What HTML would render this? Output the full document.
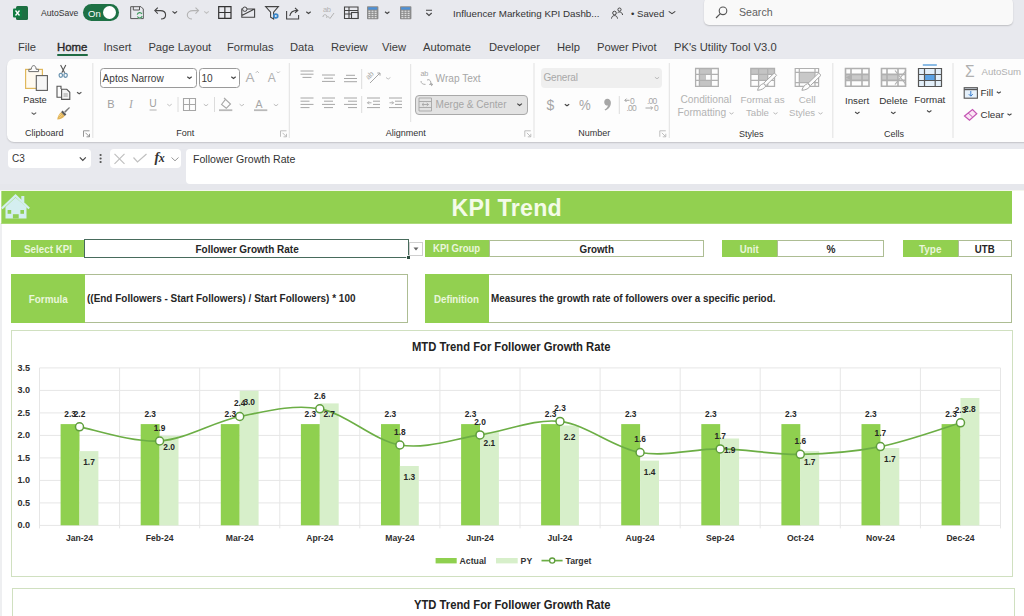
<!DOCTYPE html>
<html><head><meta charset="utf-8">
<style>
*{margin:0;padding:0;box-sizing:border-box}
html,body{width:1024px;height:616px;overflow:hidden;background:#e8e9ee;font-family:"Liberation Sans",sans-serif;color:#262626}
.a{position:absolute;white-space:nowrap}
.t{position:absolute;white-space:nowrap;line-height:1}
svg{position:absolute;overflow:visible}
.tab{font-size:11.2px;color:#3b3b3b;top:41.8px}
.gl{font-size:8.8px;color:#3a3a3a;top:129px}
.dis{color:#a8a8a8}
.lbl{background:#92d050;color:#eaf6dc;font-weight:bold;display:flex;align-items:center;justify-content:center;padding-top:1px}
.box{background:#fff;border:1.3px solid #adbd93}
</style></head><body>

<!-- ===== TITLE BAR ===== -->
<div id="titlebar">
  <!-- excel logo -->
  <svg style="left:13px;top:6px" width="15" height="14" viewBox="0 0 15 14">
    <rect x="3" y="0" width="12" height="14" rx="1.5" fill="#1d6f42"/>
    <rect x="0" y="2.5" width="9" height="9" rx="1" fill="#107c41"/>
    <path d="M2.5 4.5 L6.5 9.5 M6.5 4.5 L2.5 9.5" stroke="#fff" stroke-width="1.3"/>
  </svg>
  <div class="t" style="left:41px;top:9px;font-size:8.6px;color:#333">AutoSave</div>
  <div class="a" style="left:83px;top:4px;width:36px;height:17px;border-radius:9px;background:#1e7145"></div>
  <div class="t" style="left:88px;top:8.5px;font-size:9.5px;color:#fff">On</div>
  <div class="a" style="left:103px;top:6px;width:13px;height:13px;border-radius:50%;background:#fff"></div>
  <div class="t" style="left:453px;top:8.5px;font-size:9.8px;color:#333">Influencer Marketing KPI Dashb...</div>
  <div class="t" style="left:631px;top:8.5px;font-size:9.6px;color:#333">• Saved</div>
  <!-- search -->
  <div class="a" style="left:704px;top:-2px;width:309px;height:27px;border-radius:5px;background:#f9f9f9;box-shadow:0 1px 1.5px rgba(0,0,0,.18)"></div>
  <div class="t" style="left:739px;top:6.5px;font-size:10.6px;color:#5f5f5f">Search</div>
</div>

<!-- ===== TABS ===== -->
<div class="t tab" style="left:18px">File</div>
<div class="t tab" style="left:57px;font-size:11.4px;color:#2a2a2a;-webkit-text-stroke:0.4px #2a2a2a">Home</div>
<div class="a" style="left:57px;top:54.2px;width:31px;height:2.2px;border-radius:1.5px;background:#1f6b44"></div>
<div class="t tab" style="left:103.5px">Insert</div>
<div class="t tab" style="left:148.4px">Page Layout</div>
<div class="t tab" style="left:227px">Formulas</div>
<div class="t tab" style="left:290px">Data</div>
<div class="t tab" style="left:331px">Review</div>
<div class="t tab" style="left:382px">View</div>
<div class="t tab" style="left:423px">Automate</div>
<div class="t tab" style="left:489px">Developer</div>
<div class="t tab" style="left:557px">Help</div>
<div class="t tab" style="left:597px">Power Pivot</div>
<div class="t tab" style="left:674px">PK's Utility Tool V3.0</div>

<!-- ===== RIBBON ===== -->
<div class="a" style="left:7px;top:58.5px;width:1030px;height:83px;border-radius:7px;background:#fdfdfd;box-shadow:0 1px 1.5px rgba(0,0,0,.16)"></div>
<div id="ribbon"><div class="t" style="left:323px;top:5.5px;font-size:7.5px;color:#b3b3b3;letter-spacing:-0.3px">ab</div><div class="t" style="left:23.3px;top:96.3px;font-size:9.3px;color:#333;letter-spacing:-0.1px;">Paste</div><div class="t" style="left:25px;top:129.2px;font-size:9.0px;color:#333;">Clipboard</div><div class="a" style="left:100.4px;top:68px;width:96.3px;height:19.6px;border:1px solid #9a9a9a;border-radius:3.5px;background:#fff"></div><div class="t" style="left:102.6px;top:73.9px;font-size:10.1px;color:#3a3a3a;">Aptos Narrow</div><div class="a" style="left:199.3px;top:68px;width:41px;height:19.6px;border:1px solid #9a9a9a;border-radius:3.5px;background:#fff"></div><div class="t" style="left:201.5px;top:73.9px;font-size:10.1px;color:#3a3a3a;">10</div><div class="t" style="left:245.5px;top:71.1px;font-size:13.5px;color:#b0b0b0;">A</div><div class="t" style="left:267.8px;top:72.1px;font-size:12px;color:#b0b0b0;">A</div><div class="t" style="left:107.3px;top:98.9px;font-size:11px;color:#a0a0a0;">B</div><div class="t" style="left:129px;top:98.5px;font-size:11.5px;color:#a8a8a8;font-family:'Liberation Serif',serif;font-style:italic">I</div><div class="t" style="left:149.3px;top:98.8px;font-size:10.3px;color:#a0a0a0;">U</div><div class="t" style="left:255.5px;top:98.6px;font-size:10.5px;color:#a6a6a6;">A</div><div class="t" style="left:176.3px;top:129.2px;font-size:9.0px;color:#333;">Font</div><div class="t" style="left:366px;top:70px;font-size:7.5px;color:#a6a6a6;transform:rotate(-45deg);transform-origin:6px 5px;letter-spacing:-0.4px">ab</div><div class="t" style="left:420.5px;top:69.5px;font-size:7.3px;color:#a6a6a6;letter-spacing:-0.3px">ab</div><div class="t" style="left:435.6px;top:73.7px;font-size:10.1px;color:#a6a6a6;">Wrap Text</div><div class="a" style="left:415px;top:94.8px;width:112.8px;height:20px;border:1px solid #a9a9a9;border-radius:4px;background:#e3e3e3"></div><div class="t" style="left:435.6px;top:100.0px;font-size:10.06px;color:#a6a6a6;">Merge &amp; Center</div><div class="t" style="left:385.8px;top:129.2px;font-size:9.0px;color:#333;">Alignment</div><div class="a" style="left:541.2px;top:68px;width:121.3px;height:19.6px;border-radius:4px;background:#efefef"></div><div class="t" style="left:543.5px;top:73.4px;font-size:10px;color:#a8a8a8;letter-spacing:-0.2px;">General</div><div class="t" style="left:546.5px;top:97.9px;font-size:14px;color:#a6a6a6;">$</div><div class="t" style="left:578.6px;top:97.1px;font-size:15.5px;color:#a6a6a6;transform:scaleX(0.85);transform-origin:0 0;">%</div><div class="t" style="left:630px;top:96.5px;font-size:8.5px;color:#a6a6a6">0</div><div class="t" style="left:626.5px;top:104px;font-size:8.5px;color:#a6a6a6;letter-spacing:-0.8px">.00</div><div class="t" style="left:647px;top:96.5px;font-size:8.5px;color:#a6a6a6;letter-spacing:-0.8px">.00</div><div class="t" style="left:654px;top:104px;font-size:8.5px;color:#a6a6a6">0</div><div class="t" style="left:578.3px;top:129.2px;font-size:9.0px;color:#333;">Number</div><div class="t" style="left:680.5px;top:94.6px;font-size:10.2px;color:#b3b3b3;">Conditional</div><div class="t" style="left:677.5px;top:108.1px;font-size:10.2px;color:#b3b3b3;">Formatting</div><div class="t" style="left:740.5px;top:94.8px;font-size:9.8px;color:#b3b3b3;">Format as</div><div class="t" style="left:746px;top:108.4px;font-size:9.6px;color:#b3b3b3;">Table</div><div class="t" style="left:798.7px;top:94.8px;font-size:9.8px;color:#b3b3b3;">Cell</div><div class="t" style="left:789px;top:108.4px;font-size:9.6px;color:#b3b3b3;">Styles</div><div class="t" style="left:739px;top:129.7px;font-size:9.0px;color:#333;">Styles</div><div class="t" style="left:845px;top:95.8px;font-size:9.7px;color:#333;">Insert</div><div class="t" style="left:879.2px;top:95.7px;font-size:9.9px;color:#333;">Delete</div><div class="t" style="left:914.3px;top:94.8px;font-size:9.8px;color:#333;">Format</div><div class="t" style="left:884px;top:129.7px;font-size:9.0px;color:#333;">Cells</div><div class="t" style="left:964.8px;top:63.6px;font-size:16px;color:#b0b0b0;transform:scaleX(0.97);transform-origin:0 0;">&#931;</div><div class="t" style="left:981.6px;top:66.6px;font-size:9.6px;color:#b0b0b0;">AutoSum</div><div class="t" style="left:980.6px;top:88.1px;font-size:9.8px;color:#333;">Fill</div><div class="t" style="left:980.6px;top:110.1px;font-size:9.8px;color:#333;">Clear</div><svg style="left:0;top:0" width="1024" height="616"><path d="M130.7 6.7 H141 L143.3 9 V18.6 H130.7 Z" fill="none" stroke="#555" stroke-width="1"/><path d="M133.3 6.7 V10 H139.5 V6.7" fill="none" stroke="#555" stroke-width="1"/><circle cx="139.7" cy="15.3" r="3.3" fill="#e8e9ee"/><path d="M137.2 14.6 A2.6 2.6 0 0 1 142 14 M142.2 16 A2.6 2.6 0 0 1 137.4 16.6" fill="none" stroke="#3c9a5c" stroke-width="1.1"/><path d="M155.3 10.6 H160.3 C163.6 10.6 165.6 12.6 165.6 15 C165.6 17.4 163.6 19 161 19" fill="none" stroke="#444" stroke-width="1.1"/><path d="M157.8 7.6 L154.8 10.6 L157.8 13.6" fill="none" stroke="#444" stroke-width="1.1"/><path d="M172.5 11.4 L174.8 13.2 L177.1 11.4" fill="none" stroke="#444" stroke-width="1.1"/><path d="M198.2 10.6 H193 C189.7 10.6 187.3 12.6 187.3 15 C187.3 17.4 189.5 19 192 19" fill="none" stroke="#b3b3b3" stroke-width="1.1"/><path d="M195.5 7.6 L198.5 10.6 L195.5 13.6" fill="none" stroke="#b3b3b3" stroke-width="1.1"/><path d="M204.2 11.4 L206.5 13.2 L208.8 11.4" fill="none" stroke="#c0c0c0" stroke-width="1.1"/><path d="M218.7 6.6 H231 V18.4 H218.7 Z M224.85 6.6 V18.4 M218.7 12.5 H231" fill="none" stroke="#333" stroke-width="1.2"/><path d="M241.8 9 H254.6 V17.2 H241.8 Z M241.8 15.5 L254.6 9" fill="none" stroke="#444" stroke-width="1.1"/><circle cx="244.8" cy="9.2" r="2.2" fill="#e8e9ee" stroke="#444" stroke-width="1"/><path d="M265.6 6.6 H278.4 L273.6 12.2 V19 L270.6 17.2 V12.2 Z" fill="none" stroke="#444" stroke-width="1.1"/><circle cx="275.8" cy="16" r="2.8" fill="#3a86c8"/><circle cx="275.8" cy="16" r="1" fill="#e8e9ee"/><path d="M286.6 11 V19 H298.6 V15" fill="none" stroke="#444" stroke-width="1.1"/><path d="M289.8 16 C290.3 12.3 293 10.4 297.5 10.4 M295 8 L297.8 10.4 L295 12.8" fill="none" stroke="#444" stroke-width="1.1"/><path d="M306.3 11.8 L308.5 13.5 L310.7 11.8" fill="none" stroke="#444" stroke-width="1.1"/><path d="M323 17 A2 2 0 1 1 326.5 18 M327.5 16 L330 18.5 L334 13" fill="none" stroke="#b3b3b3" stroke-width="1"/><path d="M344.5 7 H358 V18.5 H344.5 Z M344.5 10.5 H358 M349 7 V18.5 M344.5 14 H352" fill="none" stroke="#444" stroke-width="1.1"/><rect x="351.5" y="12.5" width="6.5" height="6" fill="#e8e9ee" stroke="#444" stroke-width="1.1"/><rect x="367" y="6.3" width="11.4" height="13" rx="0.8" fill="#8a8a8a"/><rect x="368.2" y="7.3" width="9" height="2.3" fill="#4a90d9"/><rect x="368.4" y="10.6" width="2" height="1.3" fill="#dcdcdc"/><rect x="371.5" y="10.6" width="2" height="1.3" fill="#dcdcdc"/><rect x="374.6" y="10.6" width="2" height="1.3" fill="#dcdcdc"/><rect x="368.4" y="12.7" width="2" height="1.3" fill="#dcdcdc"/><rect x="371.5" y="12.7" width="2" height="1.3" fill="#dcdcdc"/><rect x="374.6" y="12.7" width="2" height="1.3" fill="#dcdcdc"/><rect x="368.4" y="14.8" width="2" height="1.3" fill="#dcdcdc"/><rect x="371.5" y="14.8" width="2" height="1.3" fill="#dcdcdc"/><rect x="374.6" y="14.8" width="2" height="1.3" fill="#dcdcdc"/><rect x="368.4" y="16.9" width="2" height="1.3" fill="#dcdcdc"/><rect x="371.5" y="16.9" width="2" height="1.3" fill="#dcdcdc"/><rect x="374.6" y="16.9" width="2" height="1.3" fill="#dcdcdc"/><rect x="400" y="6.3" width="11.4" height="13" rx="0.8" fill="#8a8a8a"/><rect x="401.2" y="7.3" width="9" height="2.3" fill="#4a90d9"/><rect x="401.4" y="10.6" width="2" height="1.3" fill="#dcdcdc"/><rect x="404.5" y="10.6" width="2" height="1.3" fill="#dcdcdc"/><rect x="407.6" y="10.6" width="2" height="1.3" fill="#dcdcdc"/><rect x="401.4" y="12.7" width="2" height="1.3" fill="#dcdcdc"/><rect x="404.5" y="12.7" width="2" height="1.3" fill="#dcdcdc"/><rect x="407.6" y="12.7" width="2" height="1.3" fill="#dcdcdc"/><rect x="401.4" y="14.8" width="2" height="1.3" fill="#dcdcdc"/><rect x="404.5" y="14.8" width="2" height="1.3" fill="#dcdcdc"/><rect x="407.6" y="14.8" width="2" height="1.3" fill="#dcdcdc"/><rect x="401.4" y="16.9" width="2" height="1.3" fill="#dcdcdc"/><rect x="404.5" y="16.9" width="2" height="1.3" fill="#dcdcdc"/><rect x="407.6" y="16.9" width="2" height="1.3" fill="#dcdcdc"/><path d="M385.0 11.8 L387.2 13.5 L389.4 11.8" fill="none" stroke="#444" stroke-width="1.1"/><path d="M426 10.3 H432 M426.3 13 L429 15.5 L431.7 13" fill="none" stroke="#444" stroke-width="1.1"/><circle cx="614.5" cy="13" r="1.8" fill="none" stroke="#444" stroke-width="1"/><path d="M611.5 18.6 C611.7 16.6 612.8 15.6 614.5 15.6 C616.2 15.6 617.3 16.6 617.5 18.6" fill="none" stroke="#444" stroke-width="1"/><circle cx="619.5" cy="9.6" r="1.6" fill="none" stroke="#444" stroke-width="1"/><path d="M617.6 12.8 C618.2 12.2 618.8 12 619.5 12 C621.2 12 622.3 13 622.6 15" fill="none" stroke="#444" stroke-width="1"/><path d="M668.7 11.4 L672.0 13.6 L675.3 11.4" fill="none" stroke="#444" stroke-width="1.1"/><circle cx="723" cy="10.8" r="3.8" fill="none" stroke="#555" stroke-width="1.1"/><path d="M720.3 13.6 L716 18" stroke="#555" stroke-width="1.2"/><rect x="25.6" y="69.4" width="16.8" height="19" fill="#fffaf0" stroke="#e0b85c" stroke-width="1.2"/><path d="M28.8 71.6 V69.3 H31.2 C31.5 66.6 32.5 65.6 33.7 65.6 C34.9 65.6 35.9 66.6 36.2 69.3 H38.6 V71.6 Z" fill="#fdfdfd" stroke="#6f6f6f" stroke-width="1"/><rect x="36.3" y="75.6" width="11.1" height="14.8" fill="#f6f6f6" stroke="#5e5e5e" stroke-width="1.1"/><path d="M31.6 112.6 L33.9 114.4 L36.2 112.6" fill="none" stroke="#555" stroke-width="1.1"/><path d="M60.6 65 L64.6 72.8 M65.8 65 L61.8 72.8" fill="none" stroke="#555" stroke-width="1.1"/><ellipse cx="60.8" cy="75.3" rx="1.7" ry="2" fill="none" stroke="#6a93b0" stroke-width="1.2"/><ellipse cx="65.6" cy="75.3" rx="1.7" ry="2" fill="none" stroke="#6a93b0" stroke-width="1.2"/><path d="M61 89 V86.2 H57 V97.2 H61" fill="none" stroke="#555" stroke-width="1.1"/><path d="M61.6 89.3 H66.8 L69.8 92.3 V99.4 H61.6 Z" fill="#f4f4f4" stroke="#555" stroke-width="1.1"/><path d="M63.5 94 H67.8 M63.5 96 H67.8" stroke="#777" stroke-width="0.7"/><path d="M77.0 92.2 L79.2 93.8 L81.4 92.2" fill="none" stroke="#555" stroke-width="1.1"/><path d="M64.2 111.6 L68.6 107.4 C69.3 106.8 70.2 107.6 69.6 108.3 L65.4 112.8 Z" fill="#7a7a7a"/><path d="M62.6 110.6 L66.4 114.4 L64.6 116 L61 112.2 Z" fill="#5a5a5a"/><path d="M61 112.2 L64.6 116 C63 118 60.5 119.5 57.2 119.6 C57.5 116.8 59 114 61 112.2 Z" fill="#e2b356"/><path d="M59.5 117.8 L62.2 115 M58.6 116.2 L61.2 113.8" stroke="#f6dfa8" stroke-width="0.7"/><path d="M83.5 136.8 V130.8 H89.5" fill="none" stroke="#8a8a8a" stroke-width="0.9"/><path d="M85.5 132.8 L89.5 136.8 M86.5 136.8 H89.5 V133.8" fill="none" stroke="#8a8a8a" stroke-width="0.9"/><path d="M92.8 63V138" stroke="#e1e1e1" stroke-width="1"/><path d="M187.3 76.8 L189.5 78.4 L191.7 76.8" fill="none" stroke="#444" stroke-width="1.2"/><path d="M231.3 76.8 L233.5 78.4 L235.7 76.8" fill="none" stroke="#444" stroke-width="1.2"/><path d="M255.8 72.8 L257.3 71.3 L258.8 72.8" fill="none" stroke="#b0b0b0" stroke-width="0.9"/><path d="M276.8 71.5 L278.3 73 L279.8 71.5" fill="none" stroke="#b0b0b0" stroke-width="0.9"/><path d="M149.6 110 H156.6" stroke="#a8a8a8" stroke-width="0.9"/><path d="M167.3 104.2 L169.5 105.8 L171.7 104.2" fill="none" stroke="#c0c0c0" stroke-width="1"/><path d="M178 97V112" stroke="#dcdcdc" stroke-width="1"/><path d="M183.5 98.5 H195.5 V110.5 H183.5 Z M189.5 98.5 V110.5 M183.5 104.5 H195.5" fill="none" stroke="#a6a6a6" stroke-width="1.1"/><path d="M203.8 104.2 L206.0 105.8 L208.2 104.2" fill="none" stroke="#c0c0c0" stroke-width="1"/><path d="M214.5 97V112" stroke="#dcdcdc" stroke-width="1"/><path d="M221.5 104.5 L225.5 99.3 L230.5 104 L226.3 108.3 Z" fill="none" stroke="#a6a6a6" stroke-width="1.1"/><path d="M225.5 99.3 L224 97.8" stroke="#a6a6a6" stroke-width="1.1"/><rect x="219" y="109.3" width="13.3" height="1.8" fill="#b9b9b9"/><path d="M239.6 104.2 L241.8 105.8 L244.0 104.2" fill="none" stroke="#c0c0c0" stroke-width="1"/><rect x="254" y="109.3" width="13.3" height="1.8" fill="#b9b9b9"/><path d="M273.8 104.2 L276.0 105.8 L278.2 104.2" fill="none" stroke="#c0c0c0" stroke-width="1"/><path d="M280.5 136.8 V130.8 H286.5" fill="none" stroke="#b8b8b8" stroke-width="0.9"/><path d="M282.5 132.8 L286.5 136.8 M283.5 136.8 H286.5 V133.8" fill="none" stroke="#b8b8b8" stroke-width="0.9"/><path d="M289.3 63V138" stroke="#e1e1e1" stroke-width="1"/><path d="M300.5 71.0H313.5M300.5 74.2H313.5" stroke="#a6a6a6" stroke-width="1"/><path d="M302.5 77.4H311.5" stroke="#a6a6a6" stroke-width="1"/><path d="M322.0 75.0H335.0M324.0 78.2H333.0M322.0 81.4H335.0" stroke="#a6a6a6" stroke-width="1"/><path d="M344.0 78.5H357.0M344.0 81.7H357.0" stroke="#a6a6a6" stroke-width="1"/><path d="M346.0 75.3H355.0" stroke="#a6a6a6" stroke-width="1"/><path d="M361.7 69V89" stroke="#dcdcdc" stroke-width="1"/><path d="M370 83 L380 73 M377.3 73 H380 V75.7" fill="none" stroke="#a6a6a6" stroke-width="1"/><path d="M386.0 77.5 L388.2 79.1 L390.4 77.5" fill="none" stroke="#c0c0c0" stroke-width="1"/><path d="M300.5 98.0H313.5M300.5 101.2H309.5M300.5 104.4H313.5M300.5 107.6H309.5" stroke="#a6a6a6" stroke-width="1"/><path d="M322.0 98.0H335.0M324.0 101.2H333.0M322.0 104.4H335.0M324.0 107.6H333.0" stroke="#a6a6a6" stroke-width="1"/><path d="M344.0 98.0H357.0M348.0 101.2H357.0M344.0 104.4H357.0M348.0 107.6H357.0" stroke="#a6a6a6" stroke-width="1"/><path d="M361.7 96V113" stroke="#dcdcdc" stroke-width="1"/><path d="M367.0 98.0H380.0M373.0 101.2H380.0M373.0 104.4H380.0M367.0 107.6H380.0" stroke="#a6a6a6" stroke-width="1"/><path d="M371.5 102.8 H367.5 M369 101.3 L367.5 102.8 L369 104.3" fill="none" stroke="#a6a6a6" stroke-width="0.9"/><path d="M389.0 98.0H402.0M395.0 101.2H402.0M395.0 104.4H402.0M389.0 107.6H402.0" stroke="#a6a6a6" stroke-width="1"/><path d="M389.5 102.8 H393.5 M392 101.3 L393.5 102.8 L392 104.3" fill="none" stroke="#a6a6a6" stroke-width="0.9"/><path d="M410.7 64V122" stroke="#e1e1e1" stroke-width="1"/><path d="M421 81 C421 83.6 423 84.4 425.5 84.4 M427 80 A2 2 0 1 1 429.5 84.5 L432.5 84.5 M431 83 L432.8 84.5 L431 86" fill="none" stroke="#a6a6a6" stroke-width="0.9"/><path d="M419 98 H431.5 V111 H419 Z M419 101.5 H431.5 M419 107.5 H431.5 M422 104.5 H428.5 M423.8 103 L422 104.5 L423.8 106 M426.7 103 L428.5 104.5 L426.7 106" fill="none" stroke="#a6a6a6" stroke-width="0.9"/><path d="M517.3 103.6 L519.6 105.4 L521.9 103.6" fill="none" stroke="#444" stroke-width="1.2"/><path d="M524.8 136.8 V130.8 H530.8" fill="none" stroke="#b8b8b8" stroke-width="0.9"/><path d="M526.8 132.8 L530.8 136.8 M527.8 136.8 H530.8 V133.8" fill="none" stroke="#b8b8b8" stroke-width="0.9"/><path d="M534 63V138" stroke="#e1e1e1" stroke-width="1"/><path d="M654.9 77.2 L657.0 78.8 L659.1 77.2" fill="none" stroke="#bbb" stroke-width="1"/><path d="M564.8 104.2 L567.0 105.8 L569.2 104.2" fill="none" stroke="#444" stroke-width="1.1"/><path d="M607.2 98.8 C609.6 98.8 610.9 100.6 610.9 102.8 C610.9 106.3 608.6 109.2 605.2 110.6 L604.6 109.6 C606.4 108.5 607.6 107.2 607.9 105.6 C605.6 105.6 604.2 104.2 604.2 102.2 C604.2 100.2 605.5 98.8 607.2 98.8 Z" fill="#a6a6a6"/><path d="M619.3 96V114" stroke="#dcdcdc" stroke-width="1"/><path d="M629.5 100.3 H624.8 M626.5 98.6 L624.8 100.3 L626.5 102" fill="none" stroke="#a6a6a6" stroke-width="1"/><path d="M645.5 108 H652.5 M650.8 106.3 L652.5 108 L650.8 109.7" fill="none" stroke="#a6a6a6" stroke-width="1"/><path d="M659.8 136.8 V130.8 H665.8" fill="none" stroke="#b8b8b8" stroke-width="0.9"/><path d="M661.8 132.8 L665.8 136.8 M662.8 136.8 H665.8 V133.8" fill="none" stroke="#b8b8b8" stroke-width="0.9"/><path d="M669.3 63V138" stroke="#e1e1e1" stroke-width="1"/><rect x="699.5" y="68.5" width="11.5" height="5.6" fill="#c4c4c4"/><rect x="699.5" y="74.4" width="6.5" height="5.8" fill="#c4c4c4"/><rect x="699.5" y="80.4" width="11.5" height="5.8" fill="#c4c4c4"/><path d="M695.6 68.5H718.3V86.3H695.6Z M699.4 68.5V86.3 M711.2 68.5V86.3 M695.6 74.4H718.3 M695.6 80.4H718.3" fill="none" stroke="#b0b0b0" stroke-width="1.3"/><rect x="750.8" y="68.5" width="23.7" height="5.9" fill="#c4c4c4"/><rect x="758.6" y="74.4" width="9.1" height="6" fill="#c4c4c4"/><path d="M750.8 68.5H774.5V86.3H750.8Z M758.6 68.5V86.3 M767.7 68.5V86.3 M750.8 74.4H774.5 M750.8 80.4H774.5" fill="none" stroke="#b0b0b0" stroke-width="1.3"/><path d="M776.6 75.3 L766 85.6 L763.6 83.3 L774.3 73 Z" fill="#fdfdfd" stroke="#a8a8a8" stroke-width="1"/><path d="M763.3 83.6 L765.8 86 C764.5 88.5 761.5 90 757.5 90.3 C758.3 87 760.5 84.5 763.3 83.6 Z" fill="#fdfdfd" stroke="#a8a8a8" stroke-width="1"/><rect x="799.5" y="72.5" width="15.5" height="10" fill="#c8c8c8"/><path d="M795.2 68.5H818.6V86.3H795.2Z M799.3 68.5V86.3 M795.2 72.4H818.6 M815 68.5V86.3 M795.2 82.6H818.6" fill="none" stroke="#b0b0b0" stroke-width="1.2"/><path d="M821 75.3 L810.4 85.6 L808 83.3 L818.7 73 Z" fill="#fdfdfd" stroke="#a8a8a8" stroke-width="1"/><path d="M807.7 83.6 L810.2 86 C808.9 88.5 805.9 90 801.9 90.3 C802.7 87 804.9 84.5 807.7 83.6 Z" fill="#fdfdfd" stroke="#a8a8a8" stroke-width="1"/><path d="M729.5 112.6 L731.5 114.0 L733.5 112.6" fill="none" stroke="#b8b8b8" stroke-width="1"/><path d="M773.5 112.6 L775.5 114.0 L777.5 112.6" fill="none" stroke="#b8b8b8" stroke-width="1"/><path d="M818.5 112.6 L820.5 114.0 L822.5 112.6" fill="none" stroke="#b8b8b8" stroke-width="1"/><path d="M832.8 63V138" stroke="#e1e1e1" stroke-width="1"/><rect x="845.5" y="74.4" width="23.5" height="6.0" fill="#c9c9c9"/><path d="M845.5 68.5H869V86.3H845.5Z M851 68.5V86.3 M862 68.5V86.3 M845.5 74.4H869 M845.5 80.4H869" fill="none" stroke="#b0b0b0" stroke-width="1.6"/><path d="M852 74 L845.5 77.4 L852 80.8 Z" fill="#b0b0b0"/><rect x="881.5" y="74.4" width="16.5" height="6.0" fill="#c9c9c9"/><path d="M881.5 68.5H905.5V86.3H881.5Z M887 68.5V86.3 M898 68.5V86.3 M881.5 74.4H905.5 M881.5 80.4H905.5" fill="none" stroke="#b0b0b0" stroke-width="1.6"/><path d="M895 70.5 L906 84.5 M906 70.5 L895 84.5" stroke="#b0b0b0" stroke-width="1.2"/><path d="M922.8 65 H936.8" stroke="#3f8fd6" stroke-width="1.2"/><rect x="918.5" y="68.5" width="23.0" height="18.0" fill="#e3f0fb"/><rect x="924.5" y="74.5" width="10.700000000000045" height="6.0" fill="#5ba3e6"/><path d="M918.5 68.5H941.5V86.5H918.5Z M924.5 68.5V86.5 M935.2 68.5V86.5 M918.5 74.5H941.5 M918.5 80.5H941.5" fill="none" stroke="#555" stroke-width="1.2"/><path d="M855.1 112.0 L857.3 113.6 L859.5 112.0" fill="none" stroke="#444" stroke-width="1.1"/><path d="M891.1 112.0 L893.3 113.6 L895.5 112.0" fill="none" stroke="#444" stroke-width="1.1"/><path d="M927.0 110.5 L929.2 112.1 L931.4 110.5" fill="none" stroke="#444" stroke-width="1.1"/><path d="M953 63V138" stroke="#e1e1e1" stroke-width="1"/><rect x="964.2" y="87.7" width="13.2" height="10.5" fill="#e6f1fb" stroke="#555" stroke-width="1.1"/><path d="M964.2 89.5 H977.4" stroke="#555" stroke-width="1.4"/><path d="M970.8 91 V96 M968.8 94.2 L970.8 96.2 L972.8 94.2" fill="none" stroke="#3a7fd0" stroke-width="1"/><path d="M996.8 91.8 L998.8 93.2 L1000.8 91.8" fill="none" stroke="#444" stroke-width="1.1"/><path d="M964.5 116 L972.5 109.5 L976.8 113.8 L969.5 120.3 Z" fill="#fbe6f5" stroke="#c455b4" stroke-width="1.2"/><path d="M968 112.8 L972.6 117" stroke="#c455b4" stroke-width="1"/><path d="M1007.5 113.8 L1009.5 115.2 L1011.5 113.8" fill="none" stroke="#444" stroke-width="1.1"/></svg></div><!--/ribbon-->

<!-- ===== FORMULA BAR ===== -->
<div class="a" style="left:8px;top:149px;width:83px;height:19px;border-radius:4px;background:#fff"></div>
<div class="t" style="left:12px;top:154px;font-size:10px;color:#333">C3</div>
<div class="a" style="left:110px;top:149px;width:71px;height:19px;border-radius:4px;background:#fff"></div>
<div class="a" style="left:186px;top:149px;width:850px;height:35px;border-radius:4px;background:#fff"></div>
<div class="t" style="left:193px;top:154px;font-size:10.6px;color:#333">Follower Growth Rate</div>
<svg style="left:0;top:0" width="1024" height="616">
<path d="M79.8 157.3 L82.8 160.3 L85.8 157.3" fill="none" stroke="#444" stroke-width="1.2"/>
<circle cx="100.6" cy="155" r="1.1" fill="#555"/><circle cx="100.6" cy="158.5" r="1.1" fill="#555"/><circle cx="100.6" cy="162" r="1.1" fill="#555"/>
<path d="M114.5 153.8 L124.5 163.8 M124.5 153.8 L114.5 163.8" stroke="#c0c0c0" stroke-width="1.2"/>
<path d="M133.5 157.5 L137.5 162 L146.5 154" fill="none" stroke="#c0c0c0" stroke-width="1.2"/>
<path d="M171.5 157.5 L175 160.8 L178.5 157.5" fill="none" stroke="#999" stroke-width="1"/>
</svg>
<div class="t" style="left:154.5px;top:151.3px;font-size:14px;font-weight:bold;color:#333;font-family:'Liberation Serif',serif;font-style:italic;letter-spacing:-0.5px">f<span style="font-size:12px">x</span></div>

<!-- ===== SHEET ===== -->
<div class="a" style="left:0;top:190px;width:1024px;height:426px;background:#fff"></div>
<div id="sheet">
<div class="a" style="left:0;top:184px;width:1024px;height:6px;background:#e6e7ec"></div>
<div class="a" style="left:0;top:190px;width:1024px;height:1px;background:#f4f6ee"></div>
<div class="a" style="left:0;top:223px;width:2px;height:393px;background:#eeeff1"></div>
<!-- banner -->
<div class="a" style="left:1px;top:191px;width:1011px;height:32.5px;background:#92d050;border-left:1px solid #b5e08a;border-bottom:1px solid #a9d975"></div>
<svg style="left:0;top:0" width="40" height="230">
  <rect x="21.3" y="196" width="3" height="6" fill="#d4eef0"/>
  <path d="M5.5 207 L15.5 197.5 L26.5 207 V218.5 H5.5 Z" fill="#d4eef0"/>
  <path d="M1.8 208.5 L15.5 195.6 L29.2 208.5" fill="none" stroke="#d4eef0" stroke-width="2.2"/>
  <rect x="7.6" y="210" width="3.6" height="3.8" fill="#8fcf57"/>
  <rect x="20.4" y="210" width="3.6" height="3.8" fill="#8fcf57"/>
  <rect x="12.9" y="214.2" width="5.8" height="4.3" fill="#8fcf57"/>
</svg>
<div class="t" style="left:451.5px;top:197.3px;font-size:23.2px;font-weight:bold;color:#f4fbe8;letter-spacing:0.25px">KPI Trend</div>

<!-- row 1 -->
<div class="a lbl" style="left:11px;top:240px;width:73.5px;height:17.3px;font-size:10.65px"><span style="display:inline-block;transform:scaleX(0.92)">Select KPI</span></div>
<div class="a" style="left:84.4px;top:239.3px;width:325px;height:18.8px;background:#fff;border:1.8px solid #486b5c;font-size:10.87px;font-weight:bold;color:#262626;display:flex;align-items:center;justify-content:center;padding-top:1px"><span style="display:inline-block;transform:scaleX(0.92)">Follower Growth Rate</span></div>
<div class="a" style="left:406.6px;top:255.7px;width:3.6px;height:3.6px;background:#2f4f42;box-shadow:0 0 0 0.8px #fff"></div>
<div class="a" style="left:409.2px;top:242px;width:13.6px;height:13.8px;background:#fff;border:1px solid #cfcfcf"></div>
<svg style="left:413px;top:247px" width="6" height="4"><path d="M0.5 0.5 L5.5 0.5 L3 3.5Z" fill="#666"/></svg>

<div class="a lbl" style="left:425px;top:239.8px;width:63.5px;height:17.2px;font-size:10.35px"><span style="display:inline-block;transform:scaleX(0.92)">KPI Group</span></div>
<div class="a box" style="left:488.5px;top:239.6px;width:215.2px;height:17.6px;font-size:10.7px;font-weight:bold;color:#262626;display:flex;align-items:center;justify-content:center;padding-left:2px;padding-top:1px"><span style="display:inline-block;transform:scaleX(0.92)">Growth</span></div>
<div class="a lbl" style="left:722px;top:239.8px;width:54.8px;height:17.2px;font-size:10.5px"><span style="display:inline-block;transform:scaleX(0.92)">Unit</span></div>
<div class="a box" style="left:776.8px;top:239.6px;width:107.2px;height:17.6px;font-size:11px;font-weight:bold;color:#262626;display:flex;align-items:center;justify-content:center;padding-top:1px"><span style="display:inline-block;transform:scaleX(0.92)">%</span></div>
<div class="a lbl" style="left:903px;top:239.8px;width:54.8px;height:17.2px;font-size:10.8px"><span style="display:inline-block;transform:scaleX(0.92)">Type</span></div>
<div class="a box" style="left:957.8px;top:239.6px;width:54px;height:17.6px;font-size:10.5px;font-weight:bold;color:#262626;display:flex;align-items:center;justify-content:center;padding-top:1px"><span style="display:inline-block;transform:scaleX(0.92)">UTB</span></div>

<!-- row 2 -->
<div class="a box" style="left:11px;top:273.5px;width:397.3px;height:49.5px"></div>
<div class="a lbl" style="left:11px;top:273.5px;width:74.2px;height:49.5px;font-size:10.75px"><span style="display:inline-block;transform:scaleX(0.92)">Formula</span></div>
<div class="t" style="left:87.3px;top:293px;font-size:10.83px;font-weight:bold;color:#262626;transform:scaleX(0.92);transform-origin:0 0">((End Followers - Start Followers) / Start Followers) * 100</div>
<div class="a box" style="left:425px;top:273.5px;width:587px;height:49.5px"></div>
<div class="a lbl" style="left:425px;top:273.5px;width:63.5px;height:49.5px;font-size:10.6px"><span style="display:inline-block;transform:scaleX(0.92)">Definition</span></div>
<div class="t" style="left:491px;top:293px;font-size:10.73px;font-weight:bold;color:#262626;transform:scaleX(0.92);transform-origin:0 0">Measures the growth rate of followers over a specific period.</div>

<!-- chart 1 box -->
<div class="a" style="left:10.5px;top:329.5px;width:1002.5px;height:247.5px;border:1.3px solid #d0e0c0;background:#fff"></div>
<div class="t" style="left:411.8px;top:340.8px;font-size:12.35px;font-weight:bold;color:#222;transform:scaleX(0.91);transform-origin:0 0">MTD Trend For Follower Growth Rate</div>
<div id="chart"><svg style="left:0;top:0" width="1024" height="616">
<path d="M39.5 525.4H1000.5 M39.5 502.9H1000.5 M39.5 480.4H1000.5 M39.5 457.9H1000.5 M39.5 435.4H1000.5 M39.5 412.9H1000.5 M39.5 390.4H1000.5 M39.5 367.9H1000.5 M39.5 367.9V528.4 M119.6 367.9V528.4 M199.7 367.9V528.4 M279.8 367.9V528.4 M359.8 367.9V528.4 M439.9 367.9V528.4 M520.0 367.9V528.4 M600.1 367.9V528.4 M680.2 367.9V528.4 M760.2 367.9V528.4 M840.3 367.9V528.4 M920.4 367.9V528.4 M1000.5 367.9V528.4" stroke="#e6e6e6" stroke-width="1" fill="none"/>
<text x="30" y="528.3" text-anchor="end" font-size="9.6" font-weight="bold" fill="#2e2e2e" textLength="12.6" lengthAdjust="spacingAndGlyphs">0.0</text>
<text x="30" y="505.8" text-anchor="end" font-size="9.6" font-weight="bold" fill="#2e2e2e" textLength="12.6" lengthAdjust="spacingAndGlyphs">0.5</text>
<text x="30" y="483.3" text-anchor="end" font-size="9.6" font-weight="bold" fill="#2e2e2e" textLength="12.6" lengthAdjust="spacingAndGlyphs">1.0</text>
<text x="30" y="460.8" text-anchor="end" font-size="9.6" font-weight="bold" fill="#2e2e2e" textLength="12.6" lengthAdjust="spacingAndGlyphs">1.5</text>
<text x="30" y="438.3" text-anchor="end" font-size="9.6" font-weight="bold" fill="#2e2e2e" textLength="12.6" lengthAdjust="spacingAndGlyphs">2.0</text>
<text x="30" y="415.8" text-anchor="end" font-size="9.6" font-weight="bold" fill="#2e2e2e" textLength="12.6" lengthAdjust="spacingAndGlyphs">2.5</text>
<text x="30" y="393.3" text-anchor="end" font-size="9.6" font-weight="bold" fill="#2e2e2e" textLength="12.6" lengthAdjust="spacingAndGlyphs">3.0</text>
<text x="30" y="370.8" text-anchor="end" font-size="9.6" font-weight="bold" fill="#2e2e2e" textLength="12.6" lengthAdjust="spacingAndGlyphs">3.5</text>
<text x="79.5" y="541.4" text-anchor="middle" font-size="9.5" font-weight="bold" fill="#2e2e2e" textLength="27.2" lengthAdjust="spacingAndGlyphs">Jan-24</text>
<text x="159.6" y="541.4" text-anchor="middle" font-size="9.5" font-weight="bold" fill="#2e2e2e" textLength="27.7" lengthAdjust="spacingAndGlyphs">Feb-24</text>
<text x="239.7" y="541.4" text-anchor="middle" font-size="9.5" font-weight="bold" fill="#2e2e2e" textLength="27.7" lengthAdjust="spacingAndGlyphs">Mar-24</text>
<text x="319.8" y="541.4" text-anchor="middle" font-size="9.5" font-weight="bold" fill="#2e2e2e" textLength="27.2" lengthAdjust="spacingAndGlyphs">Apr-24</text>
<text x="399.9" y="541.4" text-anchor="middle" font-size="9.5" font-weight="bold" fill="#2e2e2e" textLength="29.1" lengthAdjust="spacingAndGlyphs">May-24</text>
<text x="480.0" y="541.4" text-anchor="middle" font-size="9.5" font-weight="bold" fill="#2e2e2e" textLength="27.7" lengthAdjust="spacingAndGlyphs">Jun-24</text>
<text x="560.0" y="541.4" text-anchor="middle" font-size="9.5" font-weight="bold" fill="#2e2e2e" textLength="24.8" lengthAdjust="spacingAndGlyphs">Jul-24</text>
<text x="640.1" y="541.4" text-anchor="middle" font-size="9.5" font-weight="bold" fill="#2e2e2e" textLength="29.1" lengthAdjust="spacingAndGlyphs">Aug-24</text>
<text x="720.2" y="541.4" text-anchor="middle" font-size="9.5" font-weight="bold" fill="#2e2e2e" textLength="28.2" lengthAdjust="spacingAndGlyphs">Sep-24</text>
<text x="800.3" y="541.4" text-anchor="middle" font-size="9.5" font-weight="bold" fill="#2e2e2e" textLength="26.8" lengthAdjust="spacingAndGlyphs">Oct-24</text>
<text x="880.4" y="541.4" text-anchor="middle" font-size="9.5" font-weight="bold" fill="#2e2e2e" textLength="28.7" lengthAdjust="spacingAndGlyphs">Nov-24</text>
<text x="960.5" y="541.4" text-anchor="middle" font-size="9.5" font-weight="bold" fill="#2e2e2e" textLength="28.2" lengthAdjust="spacingAndGlyphs">Dec-24</text>
<rect x="60.6" y="424.1" width="18.9" height="101.2" fill="#8fd04f"/>
<rect x="79.5" y="451.1" width="18.9" height="74.2" fill="#d7efca"/>
<rect x="140.7" y="424.1" width="18.9" height="101.2" fill="#8fd04f"/>
<rect x="159.6" y="435.8" width="18.9" height="89.6" fill="#d7efca"/>
<rect x="220.8" y="424.1" width="18.9" height="101.2" fill="#8fd04f"/>
<rect x="239.7" y="390.8" width="18.9" height="134.6" fill="#d7efca"/>
<rect x="300.9" y="424.1" width="18.9" height="101.2" fill="#8fd04f"/>
<rect x="319.8" y="403.4" width="18.9" height="121.9" fill="#d7efca"/>
<rect x="381.0" y="424.1" width="18.9" height="101.2" fill="#8fd04f"/>
<rect x="399.9" y="466.0" width="18.9" height="59.4" fill="#d7efca"/>
<rect x="461.1" y="424.1" width="18.9" height="101.2" fill="#8fd04f"/>
<rect x="480.0" y="432.2" width="18.9" height="93.1" fill="#d7efca"/>
<rect x="541.1" y="424.1" width="18.9" height="101.2" fill="#8fd04f"/>
<rect x="560.0" y="425.5" width="18.9" height="99.9" fill="#d7efca"/>
<rect x="621.2" y="424.1" width="18.9" height="101.2" fill="#8fd04f"/>
<rect x="640.1" y="460.6" width="18.9" height="64.8" fill="#d7efca"/>
<rect x="701.3" y="424.1" width="18.9" height="101.2" fill="#8fd04f"/>
<rect x="720.2" y="438.5" width="18.9" height="86.9" fill="#d7efca"/>
<rect x="781.4" y="424.1" width="18.9" height="101.2" fill="#8fd04f"/>
<rect x="800.3" y="451.1" width="18.9" height="74.2" fill="#d7efca"/>
<rect x="861.5" y="424.1" width="18.9" height="101.2" fill="#8fd04f"/>
<rect x="880.4" y="448.0" width="18.9" height="77.4" fill="#d7efca"/>
<rect x="941.6" y="424.1" width="18.9" height="101.2" fill="#8fd04f"/>
<rect x="960.5" y="398.0" width="18.9" height="127.4" fill="#d7efca"/>
<path d="M79.5 426.8 C92.9 429.2 132.9 442.7 159.6 441.0 C186.3 439.3 213.0 421.9 239.7 416.5 C266.4 411.1 293.1 404.1 319.8 408.8 C346.5 413.6 373.2 440.6 399.9 445.0 C426.6 449.3 453.3 438.9 480.0 434.9 C506.7 431.0 533.3 418.5 560.0 421.4 C586.7 424.4 613.4 447.9 640.1 452.5 C666.8 457.1 693.5 448.6 720.2 448.9 C746.9 449.2 773.6 454.7 800.3 454.3 C827.0 453.9 853.7 451.9 880.4 446.6 C907.1 441.4 947.1 426.8 960.5 422.8" fill="none" stroke="#6cae45" stroke-width="1.7"/>
<circle cx="79.5" cy="426.8" r="4" fill="#fff" stroke="#5f9e3c" stroke-width="1.5"/>
<circle cx="159.6" cy="441.0" r="4" fill="#fff" stroke="#5f9e3c" stroke-width="1.5"/>
<circle cx="239.7" cy="416.5" r="4" fill="#fff" stroke="#5f9e3c" stroke-width="1.5"/>
<circle cx="319.8" cy="408.8" r="4" fill="#fff" stroke="#5f9e3c" stroke-width="1.5"/>
<circle cx="399.9" cy="445.0" r="4" fill="#fff" stroke="#5f9e3c" stroke-width="1.5"/>
<circle cx="480.0" cy="434.9" r="4" fill="#fff" stroke="#5f9e3c" stroke-width="1.5"/>
<circle cx="560.0" cy="421.4" r="4" fill="#fff" stroke="#5f9e3c" stroke-width="1.5"/>
<circle cx="640.1" cy="452.5" r="4" fill="#fff" stroke="#5f9e3c" stroke-width="1.5"/>
<circle cx="720.2" cy="448.9" r="4" fill="#fff" stroke="#5f9e3c" stroke-width="1.5"/>
<circle cx="800.3" cy="454.3" r="4" fill="#fff" stroke="#5f9e3c" stroke-width="1.5"/>
<circle cx="880.4" cy="446.6" r="4" fill="#fff" stroke="#5f9e3c" stroke-width="1.5"/>
<circle cx="960.5" cy="422.8" r="4" fill="#fff" stroke="#5f9e3c" stroke-width="1.5"/>
<text x="70.1" y="417.3" text-anchor="middle" font-size="9.3" font-weight="bold" fill="#262626" textLength="11.6" lengthAdjust="spacingAndGlyphs">2.3</text>
<text x="89.0" y="465.1" text-anchor="middle" font-size="9.3" font-weight="bold" fill="#262626" textLength="11.6" lengthAdjust="spacingAndGlyphs">1.7</text>
<text x="79.5" y="416.5" text-anchor="middle" font-size="9.3" font-weight="bold" fill="#262626" textLength="11.6" lengthAdjust="spacingAndGlyphs">2.2</text>
<text x="150.2" y="417.3" text-anchor="middle" font-size="9.3" font-weight="bold" fill="#262626" textLength="11.6" lengthAdjust="spacingAndGlyphs">2.3</text>
<text x="169.1" y="449.8" text-anchor="middle" font-size="9.3" font-weight="bold" fill="#262626" textLength="11.6" lengthAdjust="spacingAndGlyphs">2.0</text>
<text x="159.6" y="430.7" text-anchor="middle" font-size="9.3" font-weight="bold" fill="#262626" textLength="11.6" lengthAdjust="spacingAndGlyphs">1.9</text>
<text x="230.3" y="417.3" text-anchor="middle" font-size="9.3" font-weight="bold" fill="#262626" textLength="11.6" lengthAdjust="spacingAndGlyphs">2.3</text>
<text x="249.2" y="404.8" text-anchor="middle" font-size="9.3" font-weight="bold" fill="#262626" textLength="11.6" lengthAdjust="spacingAndGlyphs">3.0</text>
<text x="239.7" y="406.2" text-anchor="middle" font-size="9.3" font-weight="bold" fill="#262626" textLength="11.6" lengthAdjust="spacingAndGlyphs">2.4</text>
<text x="310.3" y="417.3" text-anchor="middle" font-size="9.3" font-weight="bold" fill="#262626" textLength="11.6" lengthAdjust="spacingAndGlyphs">2.3</text>
<text x="329.2" y="417.4" text-anchor="middle" font-size="9.3" font-weight="bold" fill="#262626" textLength="11.6" lengthAdjust="spacingAndGlyphs">2.7</text>
<text x="319.8" y="398.5" text-anchor="middle" font-size="9.3" font-weight="bold" fill="#262626" textLength="11.6" lengthAdjust="spacingAndGlyphs">2.6</text>
<text x="390.4" y="417.3" text-anchor="middle" font-size="9.3" font-weight="bold" fill="#262626" textLength="11.6" lengthAdjust="spacingAndGlyphs">2.3</text>
<text x="409.3" y="480.0" text-anchor="middle" font-size="9.3" font-weight="bold" fill="#262626" textLength="11.6" lengthAdjust="spacingAndGlyphs">1.3</text>
<text x="399.9" y="434.7" text-anchor="middle" font-size="9.3" font-weight="bold" fill="#262626" textLength="11.6" lengthAdjust="spacingAndGlyphs">1.8</text>
<text x="470.5" y="417.3" text-anchor="middle" font-size="9.3" font-weight="bold" fill="#262626" textLength="11.6" lengthAdjust="spacingAndGlyphs">2.3</text>
<text x="489.4" y="446.2" text-anchor="middle" font-size="9.3" font-weight="bold" fill="#262626" textLength="11.6" lengthAdjust="spacingAndGlyphs">2.1</text>
<text x="480.0" y="424.6" text-anchor="middle" font-size="9.3" font-weight="bold" fill="#262626" textLength="11.6" lengthAdjust="spacingAndGlyphs">2.0</text>
<text x="550.6" y="417.3" text-anchor="middle" font-size="9.3" font-weight="bold" fill="#262626" textLength="11.6" lengthAdjust="spacingAndGlyphs">2.3</text>
<text x="569.5" y="439.5" text-anchor="middle" font-size="9.3" font-weight="bold" fill="#262626" textLength="11.6" lengthAdjust="spacingAndGlyphs">2.2</text>
<text x="560.0" y="411.1" text-anchor="middle" font-size="9.3" font-weight="bold" fill="#262626" textLength="11.6" lengthAdjust="spacingAndGlyphs">2.3</text>
<text x="630.7" y="417.3" text-anchor="middle" font-size="9.3" font-weight="bold" fill="#262626" textLength="11.6" lengthAdjust="spacingAndGlyphs">2.3</text>
<text x="649.6" y="474.6" text-anchor="middle" font-size="9.3" font-weight="bold" fill="#262626" textLength="11.6" lengthAdjust="spacingAndGlyphs">1.4</text>
<text x="640.1" y="442.2" text-anchor="middle" font-size="9.3" font-weight="bold" fill="#262626" textLength="11.6" lengthAdjust="spacingAndGlyphs">1.6</text>
<text x="710.8" y="417.3" text-anchor="middle" font-size="9.3" font-weight="bold" fill="#262626" textLength="11.6" lengthAdjust="spacingAndGlyphs">2.3</text>
<text x="729.7" y="452.5" text-anchor="middle" font-size="9.3" font-weight="bold" fill="#262626" textLength="11.6" lengthAdjust="spacingAndGlyphs">1.9</text>
<text x="720.2" y="438.6" text-anchor="middle" font-size="9.3" font-weight="bold" fill="#262626" textLength="11.6" lengthAdjust="spacingAndGlyphs">1.7</text>
<text x="790.8" y="417.3" text-anchor="middle" font-size="9.3" font-weight="bold" fill="#262626" textLength="11.6" lengthAdjust="spacingAndGlyphs">2.3</text>
<text x="809.7" y="465.1" text-anchor="middle" font-size="9.3" font-weight="bold" fill="#262626" textLength="11.6" lengthAdjust="spacingAndGlyphs">1.7</text>
<text x="800.3" y="444.0" text-anchor="middle" font-size="9.3" font-weight="bold" fill="#262626" textLength="11.6" lengthAdjust="spacingAndGlyphs">1.6</text>
<text x="870.9" y="417.3" text-anchor="middle" font-size="9.3" font-weight="bold" fill="#262626" textLength="11.6" lengthAdjust="spacingAndGlyphs">2.3</text>
<text x="889.8" y="462.0" text-anchor="middle" font-size="9.3" font-weight="bold" fill="#262626" textLength="11.6" lengthAdjust="spacingAndGlyphs">1.7</text>
<text x="880.4" y="436.3" text-anchor="middle" font-size="9.3" font-weight="bold" fill="#262626" textLength="11.6" lengthAdjust="spacingAndGlyphs">1.7</text>
<text x="951.0" y="417.3" text-anchor="middle" font-size="9.3" font-weight="bold" fill="#262626" textLength="11.6" lengthAdjust="spacingAndGlyphs">2.3</text>
<text x="969.9" y="412.0" text-anchor="middle" font-size="9.3" font-weight="bold" fill="#262626" textLength="11.6" lengthAdjust="spacingAndGlyphs">2.8</text>
<text x="960.5" y="412.5" text-anchor="middle" font-size="9.3" font-weight="bold" fill="#262626" textLength="11.6" lengthAdjust="spacingAndGlyphs">2.3</text>
<rect x="435.6" y="558" width="21.1" height="5.4" fill="#8fd04f"/>
<text x="459.6" y="563.6" font-size="8.7" font-weight="bold" fill="#333">Actual</text>
<rect x="496" y="558" width="21.7" height="5.4" fill="#d7efca"/>
<text x="520.6" y="563.6" font-size="8.7" font-weight="bold" fill="#333">PY</text>
<path d="M541.5 560.6H562.6" stroke="#6cae45" stroke-width="1.7"/>
<circle cx="552.2" cy="560.6" r="2.6" fill="#fff" stroke="#5f9e3c" stroke-width="1.3"/>
<text x="565.5" y="563.6" font-size="8.7" font-weight="bold" fill="#333">Target</text>
</svg></div>

<!-- chart 2 box -->
<div class="a" style="left:11.5px;top:588.3px;width:1003px;height:40px;border:1.3px solid #d0e0c0;background:#fff"></div>
<div class="t" style="left:414px;top:598.8px;font-size:12.35px;font-weight:bold;color:#222;transform:scaleX(0.91);transform-origin:0 0">YTD Trend For Follower Growth Rate</div>
</div>

</body></html>
